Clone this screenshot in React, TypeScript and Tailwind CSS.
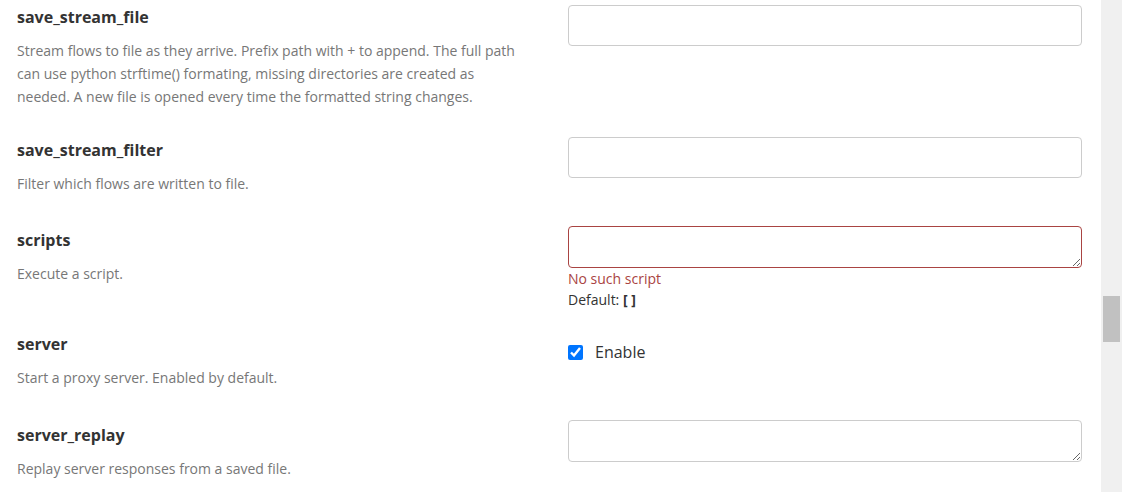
import React from 'react';

interface OptionRowProps {
  name: string;
  help: React.ReactNode;
  rowClass: string;
  leftClass?: string;
  children: React.ReactNode;
}

const OptionRow: React.FC<OptionRowProps> = ({ name, help, rowClass, leftClass = '', children }) => (
  <div className={`flex ${rowClass}`}>
    <div className={`w-[568px] shrink-0 pl-[17px] pr-[46px] ${leftClass}`}>
      <h4 className="text-[16px] leading-[24px] font-bold text-[#333]">{name}</h4>
      <p className="mt-[10px] text-[14px] leading-[23px] text-[#777]">{help}</p>
    </div>
    <div className="w-[514px] shrink-0">{children}</div>
  </div>
);

const inputClasses =
  'block w-full h-[41px] px-3 border border-[#ccc] rounded-[4px] bg-white text-[14px] focus:outline-none';

export default function App() {
  const [serverOn, setServerOn] = React.useState(true);

  return (
    <div className="flex h-[492px] w-[1122px] overflow-hidden bg-white font-['Open_Sans',sans-serif]">
      <div className="flex-1 pt-[5px]">
        <OptionRow
          name="save_stream_file"
          rowClass="h-[132px]"
          help="Stream flows to file as they arrive. Prefix path with + to append. The full path can use python strftime() formating, missing directories are created as needed. A new file is opened every time the formatted string changes."
        >
          <input type="text" className={inputClasses} />
        </OptionRow>

        <OptionRow name="save_stream_filter" rowClass="h-[89px]" leftClass="pt-[1px]" help="Filter which flows are written to file.">
          <input type="text" className={inputClasses} />
        </OptionRow>

        <OptionRow name="scripts" rowClass="h-[105px]" leftClass="pt-[2px]" help="Execute a script.">
          <textarea
            rows={1}
            className="block w-full h-[42px] px-3 py-2 border border-[#a94442] rounded-[4px] bg-white text-[14px] focus:outline-none"
          />
          <div className="mt-[1px] text-[14px] leading-[20px] text-[#a94442]">No such script</div>
          <div className="mt-[1px] text-[14px] leading-[20px] text-[#333]">
            Default: <span className="font-bold">[ ]</span>
          </div>
        </OptionRow>

        <OptionRow name="server" rowClass="h-[89px]" leftClass="pt-[1px]" help="Start a proxy server. Enabled by default.">
          <label className="mt-[10px] flex items-center gap-[12px] cursor-pointer">
            <input
              type="checkbox"
              checked={serverOn}
              onChange={(e) => setServerOn(e.target.checked)}
              className="w-[15px] h-[15px] accent-[#0075ff]"
            />
            <span className="text-[16px] leading-[22px] text-[#333]">Enable</span>
          </label>
        </OptionRow>

        <OptionRow name="server_replay" rowClass="h-[80px]" leftClass="pt-[3px]" help="Replay server responses from a saved file.">
          <textarea
            rows={1}
            className="block w-full h-[42px] px-3 py-2 border border-[#ccc] rounded-[4px] bg-white text-[14px] focus:outline-none"
          />
        </OptionRow>
      </div>

      {/* fake scrollbar */}
      <div className="w-[21px] shrink-0 bg-[#f0f0f0] pl-[2px] pr-[2px] pt-[296px]">
        <div className="h-[46px] w-full bg-[#c1c1c1]" />
      </div>
    </div>
  );
}
